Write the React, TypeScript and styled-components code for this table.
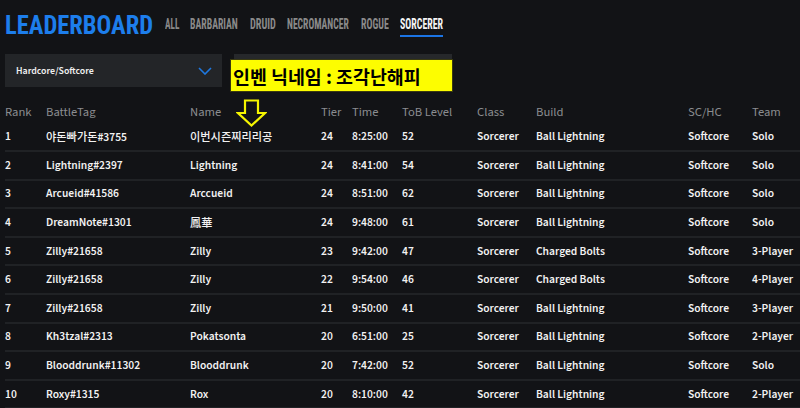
import React, { useLayoutEffect, useRef, useState } from "react";
import styled, { createGlobalStyle } from "styled-components";

const GlobalStyle = createGlobalStyle`
  html, body { margin: 0; padding: 0; background: #121316; }
  body { font-family: "Source Sans 3", "Noto Sans CJK KR", sans-serif; color: #ececec; }
  * { box-sizing: border-box; }
`;

const Page = styled.div`
  position: relative;
  width: 800px;
  height: 408px;
  overflow: hidden;
  background: #121316;
  padding-left: 5px;
`;

const TopBar = styled.header`
  display: flex;
  align-items: flex-start;
  gap: 12px;
  height: 54px;
  padding-top: 12px;
`;

const FitBox = styled.span<{ $w: number }>`
  display: block;
  width: ${(p) => p.$w}px;
  white-space: nowrap;
  overflow: visible;
`;

const FitInner = styled.span`
  display: inline-block;
  transform-origin: left center;
`;

function Fit({ width, children }: { width: number; children: React.ReactNode }) {
  const ref = useRef<HTMLSpanElement>(null);
  const [s, setS] = useState(1);
  useLayoutEffect(() => {
    if (ref.current) {
      const w = ref.current.offsetWidth;
      if (w) setS(width / w);
    }
  }, [width]);
  return (
    <FitBox $w={width}>
      <FitInner ref={ref} style={{ transform: `scaleX(${s})` }}>
        {children}
      </FitInner>
    </FitBox>
  );
}

const Logo = styled.h1`
  margin: 0;
  font-family: "Roboto Condensed", "DejaVu Sans Condensed", sans-serif;
  font-weight: 700;
  font-size: 26px;
  line-height: 26px;
  color: #1d7eec;
`;

const Nav = styled.nav`
  display: flex;
  gap: 11.4px;
  margin-top: 4px;
`;

const Tab = styled.div<{ $active?: boolean }>`
  display: flex;
  flex-direction: column;
  font-family: "Roboto Condensed", "DejaVu Sans Condensed", sans-serif;
  font-weight: 700;
  font-size: 13.8px;
  line-height: 16px;
  color: ${(p) => (p.$active ? "#f4f4f4" : "#8a8a8a")};
  &::after {
    content: "";
    display: block;
    height: 2px;
    margin-top: 3px;
    background: ${(p) => (p.$active ? "#1b74e4" : "transparent")};
  }
`;

const Filters = styled.div`
  display: flex;
  gap: 12px;
  height: 33px;
`;

const Select = styled.div`
  width: 217px;
  height: 33px;
  background: #232528;
  display: flex;
  align-items: center;
  justify-content: space-between;
  padding: 0 10px 0 11px;
  font-size: 9.9px;
  font-weight: 600;
  color: #f0f0f0;
`;

const SearchBox = styled.div`
  width: 218px;
  height: 33px;
  background: #26282b;
`;

const Annotation = styled.div`
  position: absolute;
  left: 230px;
  top: 59px;
  width: 223px;
  height: 33px;
  background: #fdfd00;
  border: 1px solid #3a3a10;
  display: flex;
  align-items: center;
  padding-left: 2px;
  font-family: "Noto Sans CJK KR", sans-serif;
  font-weight: 700;
  font-size: 18.4px;
  color: #000;
  white-space: nowrap;
`;

const ArrowMark = styled.svg`
  position: absolute;
  left: 236px;
  top: 99px;
`;

const Table = styled.div`
  margin-top: 13px;
`;

const cols = "41px 144px 131px 31px 50px 75px 59px 152px 64px 1fr";

const HeadRow = styled.div`
  display: grid;
  grid-template-columns: ${cols};
  height: 23.5px;
  align-items: center;
  font-size: 12.6px;
  font-weight: 400;
  color: #8b8d90;
`;

const Row = styled.div`
  display: grid;
  grid-template-columns: ${cols};
  height: 28.6px;
  align-items: center;
  border-bottom: 2px solid #202225;
  font-size: 11.5px;
  font-weight: 600;
  color: #f2f2f2;
`;

const Cell = styled.div`
  white-space: nowrap;
`;

const Cjk = styled.span`
  font-family: "Noto Sans CJK KR", sans-serif;
  font-weight: 500;
  font-size: 11.2px;
`;

function CellText({ text }: { text: string }) {
  const parts = text.split(/([^\x00-\x7F]+)/).filter(Boolean);
  return (
    <Cell>
      {parts.map((p, i) => (/[^\x00-\x7F]/.test(p) ? <Cjk key={i}>{p}</Cjk> : <React.Fragment key={i}>{p}</React.Fragment>))}
    </Cell>
  );
}

const headers = ["Rank", "BattleTag", "Name", "Tier", "Time", "ToB Level", "Class", "Build", "SC/HC", "Team"];

const rows: string[][] = [
  ["1", "야돈빠가돈#3755", "이번시즌찌리리공", "24", "8:25:00", "52", "Sorcerer", "Ball Lightning", "Softcore", "Solo"],
  ["2", "Lightning#2397", "Lightning", "24", "8:41:00", "54", "Sorcerer", "Ball Lightning", "Softcore", "Solo"],
  ["3", "Arcueid#41586", "Arccueid", "24", "8:51:00", "62", "Sorcerer", "Ball Lightning", "Softcore", "Solo"],
  ["4", "DreamNote#1301", "鳳華", "24", "9:48:00", "61", "Sorcerer", "Ball Lightning", "Softcore", "Solo"],
  ["5", "Zilly#21658", "Zilly", "23", "9:42:00", "47", "Sorcerer", "Charged Bolts", "Softcore", "3-Player"],
  ["6", "Zilly#21658", "Zilly", "22", "9:54:00", "46", "Sorcerer", "Charged Bolts", "Softcore", "4-Player"],
  ["7", "Zilly#21658", "Zilly", "21", "9:50:00", "41", "Sorcerer", "Ball Lightning", "Softcore", "3-Player"],
  ["8", "Kh3tzal#2313", "Pokatsonta", "20", "6:51:00", "25", "Sorcerer", "Ball Lightning", "Softcore", "2-Player"],
  ["9", "Blooddrunk#11302", "Blooddrunk", "20", "7:42:00", "52", "Sorcerer", "Ball Lightning", "Softcore", "Solo"],
  ["10", "Roxy#1315", "Rox", "20", "8:10:00", "42", "Sorcerer", "Ball Lightning", "Softcore", "2-Player"],
];

const tabs: { label: string; w: number; active?: boolean }[] = [
  { label: "ALL", w: 14 },
  { label: "BARBARIAN", w: 48 },
  { label: "DRUID", w: 26 },
  { label: "NECROMANCER", w: 62 },
  { label: "ROGUE", w: 28 },
  { label: "SORCERER", w: 43, active: true },
];

export default function App() {
  return (
    <>
      <GlobalStyle />
      <Page>
        <TopBar>
          <Logo>
            <Fit width={148}>LEADERBOARD</Fit>
          </Logo>
          <Nav>
            {tabs.map((t) => (
              <Tab key={t.label} $active={t.active}>
                <Fit width={t.w}>{t.label}</Fit>
              </Tab>
            ))}
          </Nav>
        </TopBar>
        <Filters>
          <Select>
            <span>Hardcore/Softcore</span>
            <svg width="14" height="8" viewBox="0 0 14 8">
              <polyline points="1,1 7,7 13,1" fill="none" stroke="#1e78e0" strokeWidth="1.6" />
            </svg>
          </Select>
          <SearchBox />
        </Filters>
        <Table>
          <HeadRow>
            {headers.map((h) => (
              <Cell key={h}>{h}</Cell>
            ))}
          </HeadRow>
          {rows.map((r) => (
            <Row key={r[0]}>
              {r.map((c, i) => (
                <CellText key={i} text={c} />
              ))}
            </Row>
          ))}
        </Table>
        <Annotation>인벤 닉네임 : 조각난해피</Annotation>
        <ArrowMark width="31" height="28" viewBox="0 0 31 28">
          <path d="M9 1.5 H22 V14 H29 L15.5 26.5 L2 14 H9 Z" fill="none" stroke="#f5f500" strokeWidth="2.2" strokeLinejoin="miter" />
        </ArrowMark>
      </Page>
    </>
  );
}
